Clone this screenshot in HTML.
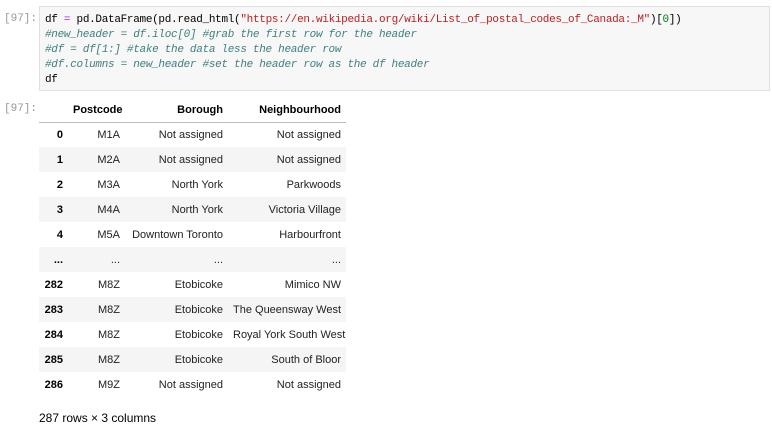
<!DOCTYPE html>
<html><head><meta charset="utf-8"><style>
body{margin:0;background:#fff;width:772px;height:433px;overflow:hidden;position:relative;font-family:"Liberation Sans",sans-serif;}
.p{position:absolute;left:4px;font-family:"Liberation Mono",monospace;font-size:11px;color:#999;}
.code{position:absolute;left:39px;top:6px;width:731px;height:85px;background:#f7f7f7;border:1px solid #e0e0e0;box-sizing:border-box;padding:6px 0 0 5px;font-family:"Liberation Mono",monospace;font-size:11px;letter-spacing:-0.3px;line-height:15px;color:#000;white-space:pre;overflow:hidden}
.c{color:#408080;font-style:italic}.s{color:#ba2121}.o{color:#aa22ff}.b{color:#008000}
table{position:absolute;left:39px;top:97px;border-collapse:collapse;font-size:11px;color:#222;table-layout:fixed;width:307px;white-space:nowrap}
td,th{height:25px;padding:0 5px;text-align:right;box-sizing:border-box;overflow:visible}
th{font-weight:bold;border-bottom:1px solid #bdbdbd;height:25px;padding-top:2px;color:#000}
td:first-child{font-weight:bold;color:#000}
tr.g td{background:#f5f5f5}
.f{position:absolute;left:39px;top:411px;font-size:12px;color:#000}
</style></head><body>
<div class="p" style="top:13px">[97]:</div>
<div class="code">df <span class="o">=</span> pd.DataFrame(pd.read_html(<span class="s">"https://en.wikipedia.org/wiki/List_of_postal_codes_of_Canada:_M"</span>)[<span class="b">0</span>])
<span class="c">#new_header = df.iloc[0] #grab the first row for the header</span>
<span class="c">#df = df[1:] #take the data less the header row</span>
<span class="c">#df.columns = new_header #set the header row as the df header</span>
df</div>
<div class="p" style="top:103px">[97]:</div>
<table>
<colgroup><col style="width:29px"><col style="width:57px"><col style="width:103px"><col style="width:118px"></colgroup>
<tr><th></th><th>Postcode</th><th>Borough</th><th>Neighbourhood</th></tr>
<tr><td>0</td><td>M1A</td><td>Not assigned</td><td>Not assigned</td></tr>
<tr class="g"><td>1</td><td>M2A</td><td>Not assigned</td><td>Not assigned</td></tr>
<tr><td>2</td><td>M3A</td><td>North York</td><td>Parkwoods</td></tr>
<tr class="g"><td>3</td><td>M4A</td><td>North York</td><td>Victoria Village</td></tr>
<tr><td>4</td><td>M5A</td><td>Downtown Toronto</td><td>Harbourfront</td></tr>
<tr class="g"><td>...</td><td>...</td><td>...</td><td>...</td></tr>
<tr><td>282</td><td>M8Z</td><td>Etobicoke</td><td>Mimico NW</td></tr>
<tr class="g"><td>283</td><td>M8Z</td><td>Etobicoke</td><td>The Queensway West</td></tr>
<tr><td>284</td><td>M8Z</td><td>Etobicoke</td><td>Royal York South West</td></tr>
<tr class="g"><td>285</td><td>M8Z</td><td>Etobicoke</td><td>South of Bloor</td></tr>
<tr><td>286</td><td>M9Z</td><td>Not assigned</td><td>Not assigned</td></tr>
</table>
<div class="f">287 rows × 3 columns</div>
</body></html>
